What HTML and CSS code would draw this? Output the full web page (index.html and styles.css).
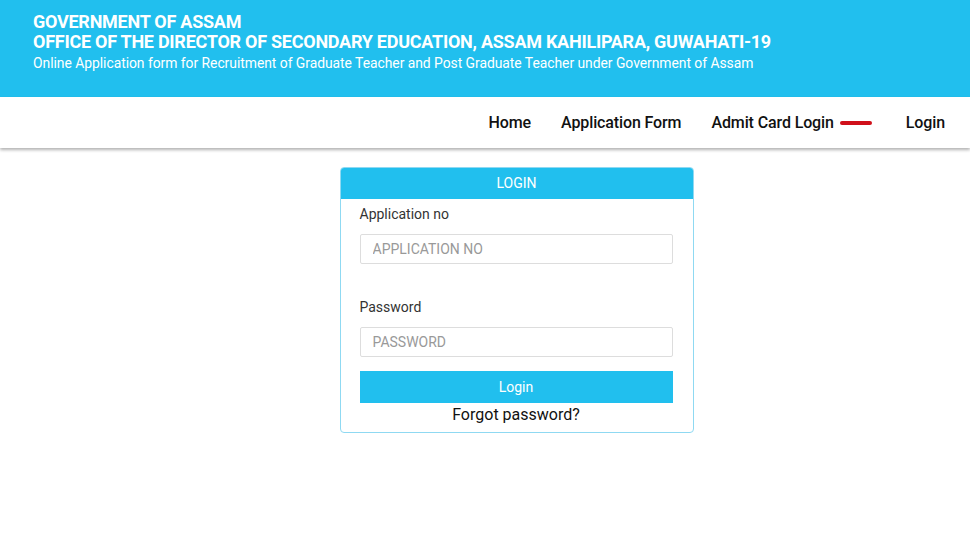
FILE: index.html
```html
<!DOCTYPE html>
<html>
<head>
<meta charset="utf-8">
<link rel="stylesheet" href="styles.css">
</head>
<body>
<header class="top">
  <div class="t1">GOVERNMENT OF ASSAM</div>
  <div class="t2">OFFICE OF THE DIRECTOR OF SECONDARY EDUCATION, ASSAM KAHILIPARA, GUWAHATI-19</div>
  <div class="t3">Online Application form for Recruitment of Graduate Teacher and Post Graduate Teacher under Government of Assam</div>
</header>
<nav class="nav">
  <a class="item">Home</a>
  <a class="item">Application Form</a>
  <a class="item">Admit Card Login <span class="new"></span></a>
  <a class="item">Login</a>
</nav>
<main class="main">
  <div class="card">
    <div class="card-head">LOGIN</div>
    <div class="card-body">
      <label class="lbl">Application no</label>
      <input class="inp" type="text" placeholder="APPLICATION NO">
      <label class="lbl lbl2">Password</label>
      <input class="inp" type="password" placeholder="PASSWORD">
      <button class="btn">Login</button>
      <div class="forgot">Forgot password?</div>
    </div>
  </div>
</main>
</body>
</html>
```
FILE: styles.css
```css
* { box-sizing: border-box; }
body { margin: 0; font-family: Roboto, "Liberation Sans", sans-serif; background: #fff; }
.top { background: #21bfee; color: #fff; height: 97px; padding: 12px 33px 0; }
.t1 { font-size: 18px; font-weight: 700; line-height: 20px; letter-spacing: -0.25px; }
.t2 { font-size: 18px; font-weight: 700; line-height: 20px; letter-spacing: -0.26px; }
.t3 { font-size: 13.9px; line-height: 18px; margin-top: 2px; letter-spacing: -0.04px; }
.nav { height: 51px; display: flex; justify-content: flex-end; align-items: center; padding-right: 25px; box-shadow: 0 2px 3px rgba(0,0,0,0.3); gap: 30px; }
.item { font-size: 16px; font-weight: 500; color: #111; display: flex; align-items: center; letter-spacing: -0.12px; }
.new { display: inline-block; width: 32px; height: 4px; background: #d0101a; margin-left: 6px; border-radius: 2px; margin-right: 4px; }
.main { display: flex; justify-content: center; padding-top: 19px; }
.card { width: 354px; border: 1px solid #8fd9f2; border-radius: 4px; margin-left: 63px; }
.card-head { background: #21bfee; color: #fff; height: 31px; line-height: 30px; text-align: center; font-size: 14px; border-radius: 3px 3px 0 0; }
.card-body { padding: 7px 20px 6px 19px; display: flex; flex-direction: column; }
.lbl { font-size: 14px; color: #333; line-height: 17px; }
.lbl2 { margin-top: 35px; }
.inp { margin-top: 11px; height: 30px; border: 1px solid #ddd; border-radius: 2px; font-family: Roboto, sans-serif; font-size: 14px; padding: 0 12px; color: #555; }
.inp::placeholder { color: #999; }
.btn { margin-top: 14px; height: 32px; border: 0; background: #21bfee; color: #fff; font-family: Roboto, sans-serif; font-size: 14px; }
.forgot { text-align: center; font-size: 16px; color: #111; line-height: 22px; margin-top: 1px; }
```
